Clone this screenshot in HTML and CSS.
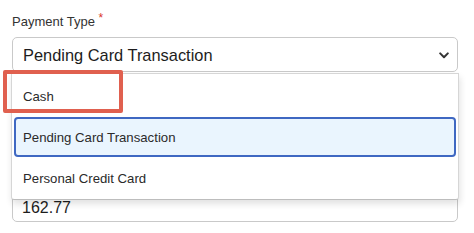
FILE: index.html
```html
<!DOCTYPE html>
<html lang="en">
<head>
    <meta charset="UTF-8">
    <meta name="viewport" content="width=device-width, initial-scale=1.0">
    <title>Payment Type</title>
    <link rel="stylesheet" href="styles.css">
</head>
<body>

    <div class="form">
        <div class="field field-type">
            <label class="field-label">Payment Type <span class="required">*</span></label>
            <div class="select">
                <span class="select-value">Pending Card Transaction</span>
                <svg class="chevron" width="10" height="7" viewBox="0 0 10 7">
                    <path d="M1.2 1.4 L5 5.2 L8.8 1.4" fill="none" stroke="#333" stroke-width="2" stroke-linecap="round" stroke-linejoin="round"/>
                </svg>
            </div>

            <ul class="dropdown">
                <li class="option">Cash</li>
                <li class="option active">Pending Card Transaction</li>
                <li class="option">Personal Credit Card</li>
            </ul>

            <div class="callout"></div>
        </div>

        <div class="field field-amount">
            <input type="text" class="text-input" value="162.77">
        </div>
    </div>

</body>
</html>
```

FILE: styles.css
```css
body {
    font-family: "Liberation Sans", Arial, Helvetica, sans-serif;
    background-color: #fff;
    color: #222;
    margin: 0;
    padding: 0 12px;
}
.form {
    width: 446px;
}
.field {
    position: relative;
}
.field-type {
    padding-top: 14px;
}
.field-label {
    display: block;
    font-size: 13px;
    line-height: 16px;
    color: #333;
    margin-bottom: 7px;
}
.required {
    color: #d9342b;
    font-size: 12px;
    position: relative;
    top: -4px;
}
.select {
    display: flex;
    align-items: center;
    justify-content: space-between;
    height: 35px;
    box-sizing: border-box;
    border: 1px solid #c9c9c9;
    border-radius: 5px;
    padding: 0 8px 0 10px;
    font-size: 16.4px;
    color: #1d1d1d;
}
.select-value {
    position: relative;
    top: 1px;
}
.chevron {
    margin-top: 1px;
}
.dropdown {
    position: absolute;
    top: 73px;
    left: -1px;
    width: 448px;
    height: 127px;
    box-sizing: border-box;
    margin: 0;
    padding: 2px 2px 0;
    list-style: none;
    background: #fff;
    border: 1px solid #d6d6d6;
    border-bottom-color: #bdbdbd;
    border-radius: 0 0 3px 3px;
    box-shadow: 1px 4px 7px rgba(0, 0, 0, 0.12);
    z-index: 2;
}
.option {
    height: 40px;
    box-sizing: border-box;
    display: flex;
    align-items: center;
    padding-left: 7px;
    border: 2px solid transparent;
    border-radius: 4px;
    font-size: 13.2px;
    color: #2a2a2a;
    margin-bottom: 1px;
}
.option.active {
    background-color: #eaf5fe;
    border-color: #3f68c2;
}
.callout {
    position: absolute;
    top: 70px;
    left: -9px;
    width: 120px;
    height: 43px;
    box-sizing: border-box;
    border: 4px solid #e0604f;
    border-radius: 2px;
    z-index: 3;
}
.field-amount {
    margin-top: 115px;
}
.text-input {
    display: block;
    width: 100%;
    height: 35px;
    box-sizing: border-box;
    border: 1px solid #c9c9c9;
    border-radius: 5px;
    padding: 0 9px;
    font-family: inherit;
    font-size: 16px;
    color: #1d1d1d;
    padding-top: 6px;
}
```
